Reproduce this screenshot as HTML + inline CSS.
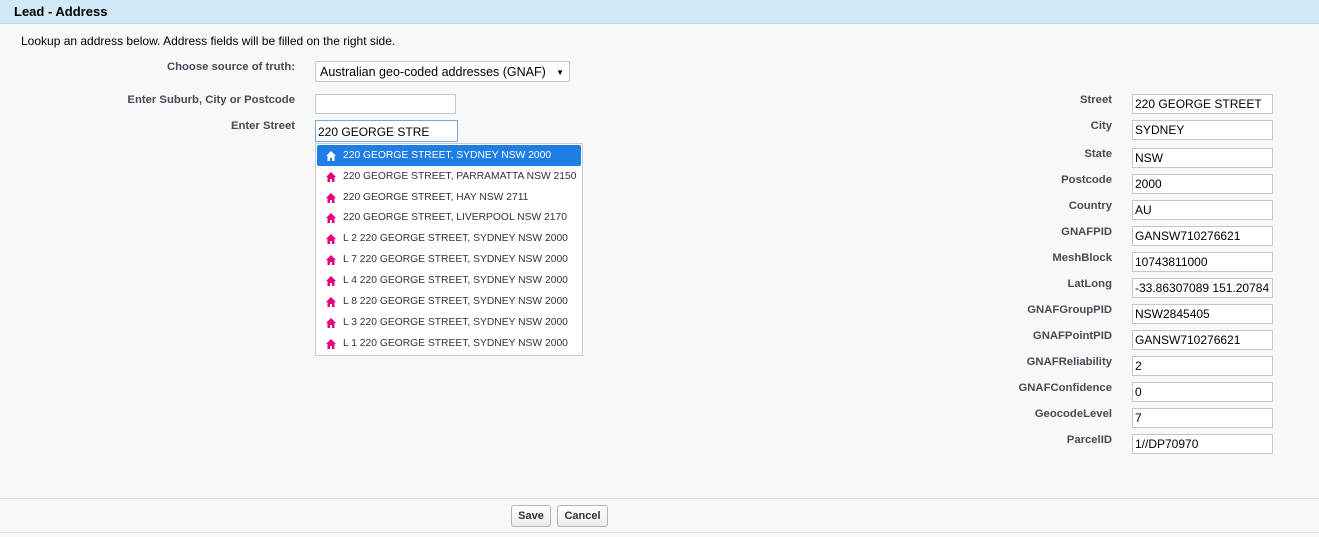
<!DOCTYPE html>
<html><head><style>
body{margin:0;width:1319px;height:537px;background:#f8f8f8;font-family:"Liberation Sans",Arial,sans-serif;position:relative;overflow:hidden}
.a{position:absolute}
.hd{left:0;top:0;width:1319px;height:23px;background:#cfeaf6;border-bottom:1px solid #bcdbe9}
.hd span{position:absolute;left:14px;top:4px;font-weight:bold;font-size:13px;color:#000}
.lb{font-size:11.3px;font-weight:bold;color:#4a4a56;text-align:right;top:1px;white-space:nowrap}
.in{background:#fff;border:1px solid #c6c6c6;height:18px;font-size:12px;line-height:19px;padding-left:2px;box-sizing:border-box;color:#000;white-space:nowrap;overflow:hidden}
.it{left:317px;width:264px;height:21px;font-size:10.3px;color:#333;line-height:21px;white-space:nowrap}
.it svg{position:absolute;left:9px;top:6px}
.it span{position:absolute;left:26px;top:0px}
.btn{border:1px solid #b5b5b5;border-radius:3px;background:linear-gradient(#fff,#ececec);font-size:11px;font-weight:bold;color:#333;text-align:center;line-height:20px;height:20px;top:505px}
</style></head><body>
<div class="a hd"><span>Lead - Address</span></div>
<div class="a" style="left:21px;top:34px;font-size:12px;color:#000">Lookup an address below. Address fields will be filled on the right side.</div>
<div class="a lb" style="right:1024px;top:61px">Choose source of truth:</div>
<div class="a in" style="left:315px;top:61px;width:255px;height:21px;border-radius:2px;font-size:12.5px;line-height:21px;padding-left:4px">Australian geo-coded addresses (GNAF)<span style="position:absolute;right:5px;top:0;font-size:8px">▼</span></div>
<div class="a lb" style="right:1024px;top:94px">Enter Suburb, City or Postcode</div>
<div class="a in" style="left:315px;top:94px;width:141px;height:20px"></div>
<div class="a lb" style="right:1024px;top:120px">Enter Street</div>
<div class="a in" style="left:315px;top:120px;width:143px;height:22px;border-color:#7aa7d6;line-height:22px">220 GEORGE STRE</div>
<div class="a" style="left:315px;top:143px;width:268px;height:213px;background:#fff;border:1px solid #ccc;box-sizing:border-box"></div>
<div class="a it" style="top:145px;background:#1f7de6;color:#fff;border-radius:2px"><svg width="10" height="10" viewBox="0 0 10 10"><path d="M5 0L0 5h1.5v5h2.5V7h2v3h2.5V5H10z" fill="#fff"/></svg><span>220 GEORGE STREET, SYDNEY NSW 2000</span></div>
<div class="a it" style="top:166px"><svg width="10" height="10" viewBox="0 0 10 10"><path d="M5 0L0 5h1.5v5h2.5V7h2v3h2.5V5H10z" fill="#e5007d"/></svg><span>220 GEORGE STREET, PARRAMATTA NSW 2150</span></div>
<div class="a it" style="top:187px"><svg width="10" height="10" viewBox="0 0 10 10"><path d="M5 0L0 5h1.5v5h2.5V7h2v3h2.5V5H10z" fill="#e5007d"/></svg><span>220 GEORGE STREET, HAY NSW 2711</span></div>
<div class="a it" style="top:207px"><svg width="10" height="10" viewBox="0 0 10 10"><path d="M5 0L0 5h1.5v5h2.5V7h2v3h2.5V5H10z" fill="#e5007d"/></svg><span>220 GEORGE STREET, LIVERPOOL NSW 2170</span></div>
<div class="a it" style="top:228px"><svg width="10" height="10" viewBox="0 0 10 10"><path d="M5 0L0 5h1.5v5h2.5V7h2v3h2.5V5H10z" fill="#e5007d"/></svg><span>L 2 220 GEORGE STREET, SYDNEY NSW 2000</span></div>
<div class="a it" style="top:249px"><svg width="10" height="10" viewBox="0 0 10 10"><path d="M5 0L0 5h1.5v5h2.5V7h2v3h2.5V5H10z" fill="#e5007d"/></svg><span>L 7 220 GEORGE STREET, SYDNEY NSW 2000</span></div>
<div class="a it" style="top:270px"><svg width="10" height="10" viewBox="0 0 10 10"><path d="M5 0L0 5h1.5v5h2.5V7h2v3h2.5V5H10z" fill="#e5007d"/></svg><span>L 4 220 GEORGE STREET, SYDNEY NSW 2000</span></div>
<div class="a it" style="top:291px"><svg width="10" height="10" viewBox="0 0 10 10"><path d="M5 0L0 5h1.5v5h2.5V7h2v3h2.5V5H10z" fill="#e5007d"/></svg><span>L 8 220 GEORGE STREET, SYDNEY NSW 2000</span></div>
<div class="a it" style="top:312px"><svg width="10" height="10" viewBox="0 0 10 10"><path d="M5 0L0 5h1.5v5h2.5V7h2v3h2.5V5H10z" fill="#e5007d"/></svg><span>L 3 220 GEORGE STREET, SYDNEY NSW 2000</span></div>
<div class="a it" style="top:333px"><svg width="10" height="10" viewBox="0 0 10 10"><path d="M5 0L0 5h1.5v5h2.5V7h2v3h2.5V5H10z" fill="#e5007d"/></svg><span>L 1 220 GEORGE STREET, SYDNEY NSW 2000</span></div>

<div class="a lb" style="right:207px;top:94px">Street</div><div class="a in" style="left:1132px;top:94px;width:141px;height:20px">220 GEORGE STREET</div>
<div class="a lb" style="right:207px;top:120px">City</div><div class="a in" style="left:1132px;top:120px;width:141px;height:20px">SYDNEY</div>
<div class="a lb" style="right:207px;top:148px">State</div><div class="a in" style="left:1132px;top:148px;width:141px;height:20px">NSW</div>
<div class="a lb" style="right:207px;top:174px">Postcode</div><div class="a in" style="left:1132px;top:174px;width:141px;height:20px">2000</div>
<div class="a lb" style="right:207px;top:200px">Country</div><div class="a in" style="left:1132px;top:200px;width:141px;height:20px">AU</div>
<div class="a lb" style="right:207px;top:226px">GNAFPID</div><div class="a in" style="left:1132px;top:226px;width:141px;height:20px">GANSW710276621</div>
<div class="a lb" style="right:207px;top:252px">MeshBlock</div><div class="a in" style="left:1132px;top:252px;width:141px;height:20px">10743811000</div>
<div class="a lb" style="right:207px;top:278px">LatLong</div><div class="a in" style="left:1132px;top:278px;width:141px;height:20px">-33.86307089 151.20784</div>
<div class="a lb" style="right:207px;top:304px">GNAFGroupPID</div><div class="a in" style="left:1132px;top:304px;width:141px;height:20px">NSW2845405</div>
<div class="a lb" style="right:207px;top:330px">GNAFPointPID</div><div class="a in" style="left:1132px;top:330px;width:141px;height:20px">GANSW710276621</div>
<div class="a lb" style="right:207px;top:356px">GNAFReliability</div><div class="a in" style="left:1132px;top:356px;width:141px;height:20px">2</div>
<div class="a lb" style="right:207px;top:382px">GNAFConfidence</div><div class="a in" style="left:1132px;top:382px;width:141px;height:20px">0</div>
<div class="a lb" style="right:207px;top:408px">GeocodeLevel</div><div class="a in" style="left:1132px;top:408px;width:141px;height:20px">7</div>
<div class="a lb" style="right:207px;top:434px">ParcelID</div><div class="a in" style="left:1132px;top:434px;width:141px;height:20px">1//DP70970</div>

<div class="a" style="left:0;top:498px;width:1319px;height:1px;background:#dcdcdc"></div>
<div class="a" style="left:0;top:532px;width:1319px;height:1px;background:#e4e4e4"></div>
<div class="a btn" style="left:511px;width:38px">Save</div>
<div class="a btn" style="left:557px;width:49px">Cancel</div>
</body></html>
